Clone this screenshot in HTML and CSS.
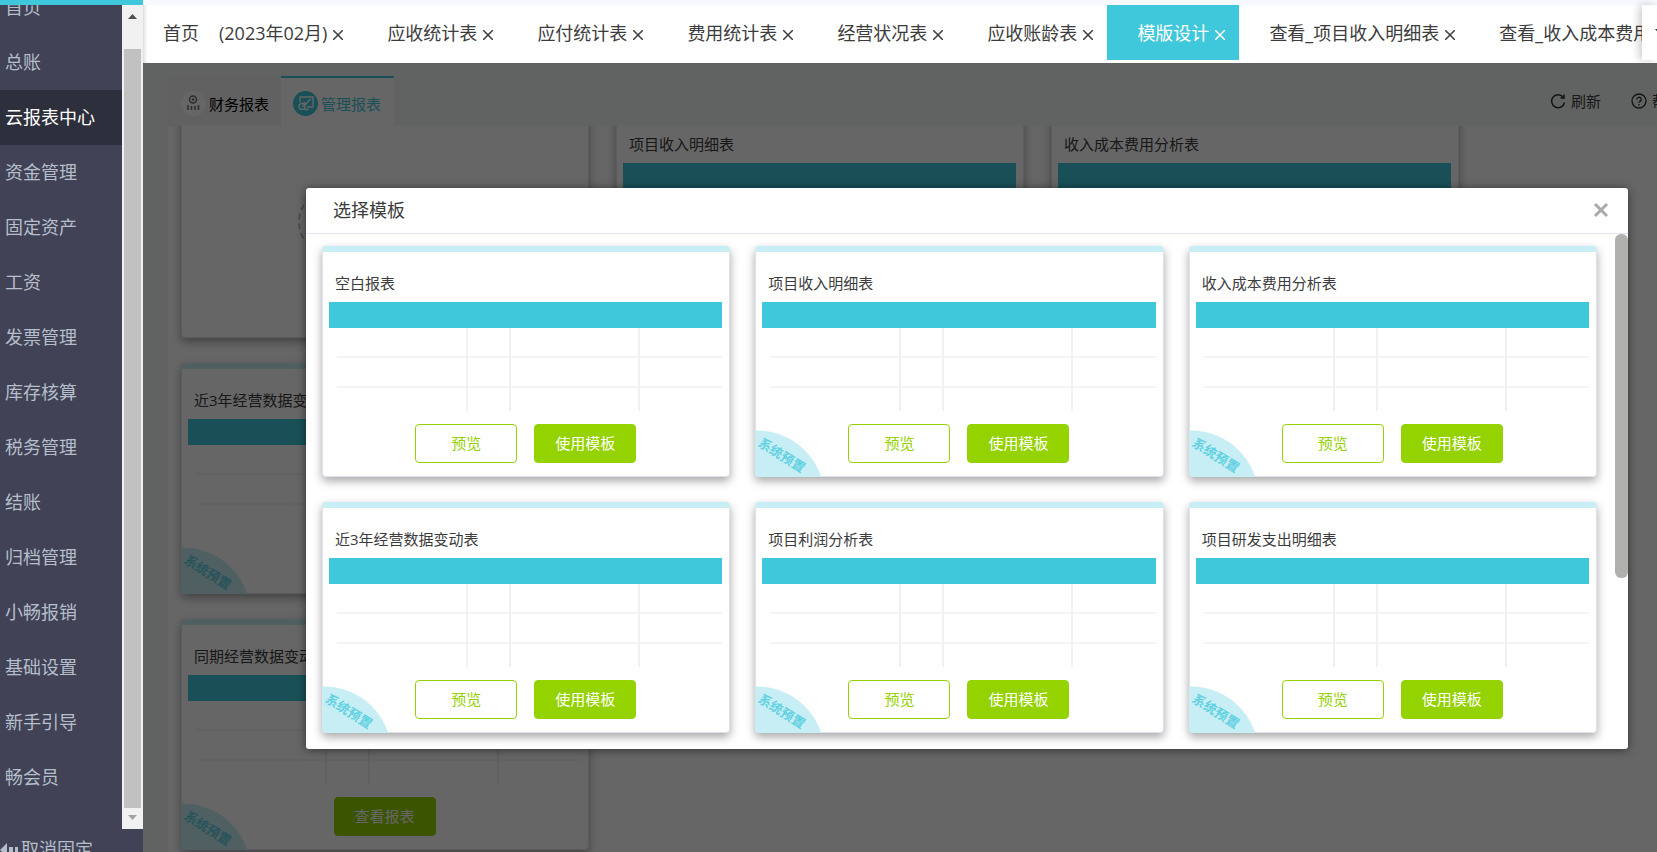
FILE: index.html
```html
<!DOCTYPE html>
<html lang="zh-CN">
<head>
    <meta charset="UTF-8">
    <meta name="viewport" content="width=device-width, initial-scale=1.0">
    <title>模版设计</title>
    <link rel="stylesheet" href="styles.css">
</head>
<body>
    <div class="app">
        <aside class="sidebar">
            <div class="menu-wrap">
                <nav class="menu">
                    <a href="#">首页</a>
                    <a href="#">总账</a>
                    <a href="#" class="active">云报表中心</a>
                    <a href="#">资金管理</a>
                    <a href="#">固定资产</a>
                    <a href="#">工资</a>
                    <a href="#">发票管理</a>
                    <a href="#">库存核算</a>
                    <a href="#">税务管理</a>
                    <a href="#">结账</a>
                    <a href="#">归档管理</a>
                    <a href="#">小畅报销</a>
                    <a href="#">基础设置</a>
                    <a href="#">新手引导</a>
                    <a href="#">畅会员</a>
                </nav>
                <div class="scrollbar">
                    <svg class="arrow" width="21" height="28" viewBox="0 0 21 28"><path d="M6 14l4.500-5 4.500 5z" fill="#505050"/></svg>
                    <div class="thumb"></div>
                    <svg class="arrow" width="21" height="21" viewBox="0 0 21 21"><path d="M6 7h9l-4.500 5z" fill="#a3a3a3"/></svg>
                </div>
            </div>
            <button class="unpin">
                <svg width="19" height="14" viewBox="0 0 19 14"><path d="M0 7l7-7v14zM9 4h4v10H9zM15 4h3v10h-3z" fill="#b4bfcb"/></svg>
                取消固定
            </button>
        </aside>

        <div class="main">
            <div class="tabs">
                <div class="tab-list">
                    <div class="tab home"><a href="#">首页</a></div>
                    <div class="tab period"><a href="#">(2023年02月)</a><button class="close" aria-label="关闭"><svg width="10" height="10" viewBox="0 0 10 10"><path d="M0 0l10 10M10 0L0 10"/></svg></button></div>
                    <div class="tab"><a href="#">应收统计表</a><button class="close" aria-label="关闭"><svg width="10" height="10" viewBox="0 0 10 10"><path d="M0 0l10 10M10 0L0 10"/></svg></button></div>
                    <div class="tab"><a href="#">应付统计表</a><button class="close" aria-label="关闭"><svg width="10" height="10" viewBox="0 0 10 10"><path d="M0 0l10 10M10 0L0 10"/></svg></button></div>
                    <div class="tab"><a href="#">费用统计表</a><button class="close" aria-label="关闭"><svg width="10" height="10" viewBox="0 0 10 10"><path d="M0 0l10 10M10 0L0 10"/></svg></button></div>
                    <div class="tab"><a href="#">经营状况表</a><button class="close" aria-label="关闭"><svg width="10" height="10" viewBox="0 0 10 10"><path d="M0 0l10 10M10 0L0 10"/></svg></button></div>
                    <div class="tab"><a href="#">应收账龄表</a><button class="close" aria-label="关闭"><svg width="10" height="10" viewBox="0 0 10 10"><path d="M0 0l10 10M10 0L0 10"/></svg></button></div>
                    <div class="tab active"><a href="#">模版设计</a><button class="close" aria-label="关闭"><svg width="10" height="10" viewBox="0 0 10 10"><path d="M0 0l10 10M10 0L0 10"/></svg></button></div>
                    <div class="tab"><a href="#">查看_项目收入明细表</a><button class="close" aria-label="关闭"><svg width="10" height="10" viewBox="0 0 10 10"><path d="M0 0l10 10M10 0L0 10"/></svg></button></div>
                    <div class="tab"><a href="#">查看_收入成本费用</a></div>
                </div>
                <button class="tab-more" aria-label="更多"><svg width="12" height="8" viewBox="0 0 12 8"><path d="M0 0h12L6 7z" fill="#333"/></svg></button>
            </div>

            <div class="content">
                <header class="toolbar">
                    <div class="types">
                        <button class="type">
                            <svg width="25" height="25" viewBox="0 0 25 25"><circle cx="12.500" cy="12.500" r="12.500" fill="#fff"/><g fill="none" stroke="#6c6c78" stroke-width="1.500"><circle cx="12" cy="8.500" r="3.500"/><path d="M7 19v-5M10.500 19v-4M14 19v-4M17.500 19v-5"/></g><circle cx="12" cy="8.500" r="1.200" fill="#6c6c78"/></svg>
                            财务报表
                        </button>
                        <button class="type active">
                            <svg width="25" height="25" viewBox="0 0 25 25"><circle cx="12.500" cy="12.500" r="12.500" fill="#3fc7dc"/><g fill="none" stroke="#fff" stroke-width="1.300"><path d="M7 11V6h13v10h-6"/><path d="M10.500 11l2.500 2 4.500-5"/><circle cx="9" cy="15.500" r="3"/><path d="M9 15.500l5-3M11.500 18.500h4"/></g></svg>
                            管理报表
                        </button>
                    </div>
                    <div class="actions">
                        <button class="action">
                            <svg width="16" height="16" viewBox="0 0 16 16" fill="none" stroke="#333" stroke-width="1.500"><path d="M13.500 4.500a6.500 6.500 0 1 0 1 5M14 1.500v3.500h-3.500"/></svg>
                            刷新
                        </button>
                        <button class="action">
                            <svg width="16" height="16" viewBox="0 0 16 16" fill="none" stroke="#333" stroke-width="1.300"><circle cx="8" cy="8" r="7"/><path d="M5.800 6.500a2.200 2.200 0 1 1 3.200 1.900q-1 .5-1 1.400M8 11v1.500"/></svg>
                            帮助
                        </button>
                    </div>
                </header>

                <div class="reports">
                    <div class="report-grid">
                        <div class="card add-card"><div class="add-circle"></div></div>
                        <div class="card">
                            <h3>项目收入明细表</h3>
                            <div class="sheet"></div>
                            <div class="buttons"><button class="btn primary">查看报表</button></div>
                            <div class="badge"><span>系统预置</span></div>
                        </div>
                        <div class="card">
                            <h3>收入成本费用分析表</h3>
                            <div class="sheet"></div>
                            <div class="buttons"><button class="btn primary">查看报表</button></div>
                            <div class="badge"><span>系统预置</span></div>
                        </div>
                        <div class="card first-col">
                            <h3>近3年经营数据变动表</h3>
                            <div class="sheet"></div>
                            <div class="buttons"><button class="btn primary">查看报表</button></div>
                            <div class="badge"><span>系统预置</span></div>
                        </div>
                        <div class="card first-col">
                            <h3>同期经营数据变动表</h3>
                            <div class="sheet"></div>
                            <div class="buttons"><button class="btn primary">查看报表</button></div>
                            <div class="badge"><span>系统预置</span></div>
                        </div>
                    </div>
                </div>

                <div class="overlay">
                    <div class="modal" role="dialog" aria-labelledby="modalTitle">
                        <div class="modal-header">
                            <h2 id="modalTitle">选择模板</h2>
                            <button class="modal-close" aria-label="关闭"><svg width="16" height="16" viewBox="0 0 16 16"><path d="M3 3l10 10M13 3L3 13" stroke="#aaa" stroke-width="3" stroke-linecap="square"/></svg></button>
                        </div>
                        <div class="modal-body">
                            <div class="template-grid">
                                <div class="card">
                                    <h3>空白报表</h3>
                                    <div class="sheet"></div>
                                    <div class="buttons"><button class="btn">预览</button><button class="btn primary">使用模板</button></div>
                                </div>
                                <div class="card">
                                    <h3>项目收入明细表</h3>
                                    <div class="sheet"></div>
                                    <div class="buttons"><button class="btn">预览</button><button class="btn primary">使用模板</button></div>
                                    <div class="badge"><span>系统预置</span></div>
                                </div>
                                <div class="card">
                                    <h3>收入成本费用分析表</h3>
                                    <div class="sheet"></div>
                                    <div class="buttons"><button class="btn">预览</button><button class="btn primary">使用模板</button></div>
                                    <div class="badge"><span>系统预置</span></div>
                                </div>
                                <div class="card">
                                    <h3>近3年经营数据变动表</h3>
                                    <div class="sheet"></div>
                                    <div class="buttons"><button class="btn">预览</button><button class="btn primary">使用模板</button></div>
                                    <div class="badge"><span>系统预置</span></div>
                                </div>
                                <div class="card">
                                    <h3>项目利润分析表</h3>
                                    <div class="sheet"></div>
                                    <div class="buttons"><button class="btn">预览</button><button class="btn primary">使用模板</button></div>
                                    <div class="badge"><span>系统预置</span></div>
                                </div>
                                <div class="card">
                                    <h3>项目研发支出明细表</h3>
                                    <div class="sheet"></div>
                                    <div class="buttons"><button class="btn">预览</button><button class="btn primary">使用模板</button></div>
                                    <div class="badge"><span>系统预置</span></div>
                                </div>
                            </div>
                            <div class="modal-scroll"></div>
                        </div>
                    </div>
                </div>
            </div>
        </div>
    </div>
</body>
</html>
```
FILE: styles.css
```css
* {
    box-sizing: border-box;
}
body {
    margin: 0;
    font-family: "Open Sans", "Noto Sans CJK SC", sans-serif;
    font-size: 15px;
    color: #3c3c3c;
    overflow: hidden;
}
button {
    font-family: inherit;
    font-size: inherit;
    color: inherit;
    border: none;
    background: none;
    padding: 0;
    cursor: pointer;
}
a {
    color: inherit;
    text-decoration: none;
}
h2, h3 {
    margin: 0;
    font-weight: normal;
}
svg {
    display: block;
    flex: none;
}
.app {
    display: flex;
    height: 100vh;
}

/* sidebar */
.sidebar {
    width: 143px;
    flex: none;
    display: flex;
    flex-direction: column;
    background: #424256;
    border-top: 5px solid #3fc7dc;
    overflow: hidden;
}
.menu-wrap {
    flex: 1;
    min-height: 0;
    display: flex;
    overflow: hidden;
}
.menu {
    flex: 1;
    margin-top: -25px;
}
.menu a {
    display: block;
    height: 55px;
    line-height: 55px;
    padding-left: 5px;
    font-size: 18px;
    white-space: nowrap;
    color: #b4bfcb;
}
.menu a.active {
    background: #2d303c;
    color: #fff;
}
.scrollbar {
    width: 21px;
    display: flex;
    flex-direction: column;
    background: #f1f1f1;
}
.thumb {
    flex: 1;
    margin: 16px 2px 0;
    background: #c1c1c1;
}
.unpin {
    height: 23px;
    flex: none;
    display: flex;
    align-items: flex-start;
    gap: 2px;
    padding-top: 8px;
    font-size: 18px;
    line-height: 24px;
    white-space: nowrap;
    color: #b4bfcb;
}
.unpin svg {
    margin-top: 6px;
}

/* top tabs */
.main {
    flex: 1;
    min-width: 0;
    display: flex;
    flex-direction: column;
}
.tabs {
    display: flex;
    height: 63px;
    flex: none;
    border-top: 5px solid #f7f9fe;
    background: #fff;
    box-shadow: inset 4px 0 4px -3px rgba(0,0,0,0.2);
}
.tab-list {
    flex: 1;
    min-width: 0;
    display: flex;
    overflow: hidden;
}
.tab {
    flex: none;
    display: flex;
    align-items: center;
    gap: 6px;
    height: 55px;
    padding: 0 14px 0 30px;
    font-size: 18px;
    line-height: 56px;
    white-space: nowrap;
}
.tab.home {
    padding: 0 0 0 20px;
}
.tab.period {
    padding-left: 20px;
}
.tab.active {
    background: #3fc7dc;
    color: #fff;
}
.close svg {
    margin-top: 4px;
    fill: none;
    stroke: currentColor;
    stroke-width: 1.5;
}
.tab-more {
    width: 15px;
    height: 55px;
    flex: none;
    padding-left: 13px;
    overflow: hidden;
    box-shadow: -3px 0 8px rgba(0,0,0,0.2);
}

/* report list */
.content {
    position: relative;
    flex: 1;
    min-height: 0;
    display: flex;
    flex-direction: column;
    padding-left: 25px;
    background: #f2f7f5;
}
.toolbar {
    height: 63px;
    flex: none;
    display: flex;
    justify-content: space-between;
    overflow: hidden;
}
.types {
    display: flex;
    padding-top: 13px;
}
.type {
    width: 113px;
    height: 50px;
    display: flex;
    align-items: center;
    gap: 3px;
    padding: 3px 0 0 13px;
    border-top: 2px solid #f0f2f1;
    background: #f0f2f1;
    white-space: nowrap;
    color: #000;
}
.type.active {
    padding-left: 12px;
    border-top-color: #3fc7dc;
    background: #fff;
    color: #3fc7dc;
}
.actions {
    display: flex;
    gap: 30px;
    height: 75px;
    margin-right: -25px;
}
.action {
    display: flex;
    align-items: center;
    gap: 5px;
    white-space: nowrap;
}
.reports {
    flex: 1;
    min-height: 0;
    padding-left: 13px;
    background: #fff;
    overflow: hidden;
}
.report-grid {
    display: grid;
    grid-template-columns: repeat(3, 408px);
    gap: 25px 27px;
    margin-top: -19px;
}
.first-col {
    grid-column: 1;
}

/* card */
.card {
    position: relative;
    height: 231px;
    padding: 22px 7px 0 6px;
    border: 1px solid #dfe3f0;
    border-top: 6px solid #c7eef5;
    border-radius: 4px;
    background: #fff;
    box-shadow: 0 4px 10px rgba(0,0,0,0.35);
}
.card h3 {
    height: 28px;
    padding-left: 6px;
    font-size: 15px;
    line-height: 18px;
}
.sheet {
    height: 109px;
    border-top: 26px solid #3fc7dc;
    background:
        linear-gradient(#f1f1f1, #f1f1f1) 35% 0 / 2px 100%,
        linear-gradient(#f1f1f1, #f1f1f1) 46% 0 / 2px 100%,
        linear-gradient(#f1f1f1, #f1f1f1) 79% 0 / 2px 100%,
        linear-gradient(#f4f4f4, #f4f4f4) 8px 28px / 100% 2px,
        linear-gradient(#f4f4f4, #f4f4f4) 8px 58px / 100% 2px;
    background-repeat: no-repeat;
}
.buttons {
    display: flex;
    justify-content: center;
    gap: 17px;
    padding-top: 13px;
}
.btn {
    width: 102px;
    height: 39px;
    padding-bottom: 2px;
    border: 1px solid #94d200;
    border-radius: 4px;
    font-size: 15px;
    color: #94d200;
}
.btn.primary {
    background: #94d200;
    color: #fff;
}
.badge {
    position: absolute;
    left: -1px;
    bottom: -1px;
    width: 68px;
    height: 47px;
    overflow: hidden;
    border-bottom-left-radius: 4px;
    background: radial-gradient(circle at 2px 68px, #c7eef5 67px, transparent 68px);
    display: flex;
    align-items: center;
    padding: 2px 0 0 1px;
}
.badge span {
    width: 52px;
    font-size: 13px;
    line-height: 16px;
    font-weight: bold;
    white-space: nowrap;
    color: #62d1e2;
    transform: rotate(32deg);
}
.add-card {
    display: flex;
    align-items: center;
    padding: 0 0 6px 116px;
}
.add-circle {
    width: 68px;
    height: 68px;
    border: 2px dashed #bbb;
    border-radius: 50%;
}

/* template dialog */
.overlay {
    position: absolute;
    inset: 0;
    display: flex;
    padding: 125px 29px 103px 163px;
    background: rgba(0,0,0,0.6);
}
.modal {
    flex: 1;
    min-width: 0;
    display: flex;
    flex-direction: column;
    border-radius: 3px;
    background: #fff;
    box-shadow: 0 1px 10px rgba(0,0,0,0.5);
    overflow: hidden;
}
.modal-header {
    height: 46px;
    flex: none;
    display: flex;
    align-items: center;
    justify-content: space-between;
    padding: 0 19px 2px 27px;
    border-bottom: 1px solid #e4e5f2;
}
.modal-header h2 {
    font-size: 18px;
    line-height: 24px;
}
.modal-body {
    flex: 1;
    min-height: 0;
    display: flex;
    overflow: hidden;
}
.template-grid {
    flex: 1;
    display: grid;
    grid-template-columns: repeat(3, 1fr);
    align-content: start;
    gap: 25px;
    padding: 12px 18px 0 16px;
}
.modal-scroll {
    width: 13px;
    height: 344px;
    border-radius: 6px;
    background: #b0b0ae;
}
```
